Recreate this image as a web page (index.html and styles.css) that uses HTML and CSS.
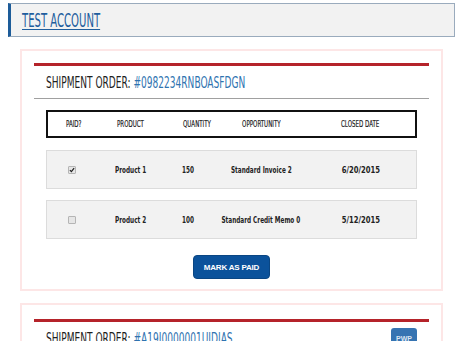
FILE: index.html
```html
<!DOCTYPE html>
<html>
<head>
<meta charset="utf-8">
<link rel="stylesheet" href="styles.css">
</head>
<body>
<div class="account"><a href="#" class="account-link sx">TEST ACCOUNT</a></div>

<div class="card">
  <div class="card-head">
    <h2 class="title"><span class="sx">SHIPMENT ORDER: <span class="num">#0982234RNBOASFDGN</span></span></h2>
  </div>
  <div class="table">
    <div class="thead row">
      <div class="c c1"><span class="sx">PAID?</span></div>
      <div class="c c2"><span class="sx">PRODUCT</span></div>
      <div class="c c3"><span class="sx">QUANTITY</span></div>
      <div class="c c4"><span class="sx">OPPORTUNITY</span></div>
      <div class="c c5"><span class="sx">CLOSED DATE</span></div>
    </div>
    <div class="tr row">
      <div class="c c1"><span class="cb checked"><svg viewBox="0 0 8 8" width="6" height="6"><path d="M1.2 4.2 L3.2 6.2 L6.8 1.6" fill="none" stroke="#222" stroke-width="1.7"/></svg></span></div>
      <div class="c c2"><span class="sx">Product 1</span></div>
      <div class="c c3"><span class="sx">150</span></div>
      <div class="c c4"><span class="sx">Standard Invoice 2</span></div>
      <div class="c c5"><span class="sx">6/20/2015</span></div>
    </div>
    <div class="tr row tr2">
      <div class="c c1"><span class="cb"></span></div>
      <div class="c c2"><span class="sx">Product 2</span></div>
      <div class="c c3"><span class="sx">100</span></div>
      <div class="c c4"><span class="sx">Standard Credit Memo 0</span></div>
      <div class="c c5"><span class="sx">5/12/2015</span></div>
    </div>
  </div>
  <div class="actions"><button class="btn">MARK AS PAID</button></div>
</div>

<div class="card card2">
  <div class="card-head">
    <h2 class="title"><span class="sx">SHIPMENT ORDER: <span class="num">#A19J0000001UJDIAS</span></span></h2>
    <button class="badge">PWP</button>
  </div>
</div>
</body>
</html>
```
FILE: styles.css
```css
html, body { margin: 0; padding: 0; background: #fff; overflow: hidden; }
body {
  width: 474px; height: 341px;
  padding: 3px 0 0 8px;
  box-sizing: border-box;
  font-family: "DejaVu Sans Condensed", "DejaVu Sans", sans-serif;
}
.sx {
  display: inline-block;
  white-space: nowrap;
  transform-origin: left center;
}
.account {
  width: 447px; height: 34px;
  box-sizing: border-box;
  background: #f2f2f2;
  border: 1px solid #9aabbd;
  border-left: 3px solid #1d5c99;
  display: flex; align-items: center;
  padding-left: 11px;
}
.account-link {
  color: #1f5e9e;
  font-size: 19px;
  text-decoration: underline;
  text-underline-offset: 2px;
  text-decoration-thickness: 1px;
  transform: scaleX(0.59);
}
.card {
  margin: 12px 0 0 12px;
  width: 423px;
  box-sizing: border-box;
  border: 2px solid #fde6e6;
  padding: 12px 12px 10px 12px;
}
.card2 { padding-top: 14px; }
.card-head {
  border-top: 3px solid #b5232a;
  border-bottom: 1px solid #a0a0a0;
  height: 32px;
  display: flex; align-items: center; justify-content: space-between;
  padding: 0 12px;
}
.card2 .card-head { align-items: flex-start; }
.card2 .title { margin-top: 7px; }
.title {
  margin: 0;
  font-weight: normal;
  font-size: 16.5px;
  color: #1e1e1e;
}
.title .sx { transform: scaleX(0.61); }
.num { color: #2f73b0; }
.table { padding: 11px 12px 0; }
.row { display: flex; align-items: center; box-sizing: border-box; }
.thead {
  height: 28px;
  border: 2px solid #111;
  font-size: 9px;
  color: #1a1a1a;
}
.thead .sx { transform: scaleX(0.68); -webkit-text-stroke: 0.2px #1a1a1a; }
.tr {
  height: 39px;
  margin-top: 12px;
  background: #f2f2f2;
  border: 1px solid #dcdcdc;
  font-size: 9.5px;
  font-weight: bold;
  color: #222;
}
.tr2 { margin-top: 11px; }
.tr .sx { transform: scaleX(0.67); }
.tr .c5 .sx { transform: scaleX(0.8); }
.c { box-sizing: border-box; display: flex; align-items: center; }
.c1 { width: 64px; padding-left: 18px; }
.c2 { width: 68px; padding-left: 5px; }
.c3 { width: 37px; padding-left: 4px; }
.c4 { width: 90px; justify-content: center; }
.c5 { width: 110px; justify-content: center; }
.c4 .sx, .c5 .sx { transform-origin: center center; }
.tr .c1 { padding-left: 21px; }
.tr .c2 { padding-left: 4px; }
.tr .c3 { padding-left: 3px; }
.thead .c2 { padding-left: 5px; }
.cb {
  display: inline-flex; align-items: center; justify-content: center;
  width: 8px; height: 8px;
  box-sizing: border-box;
  border: 1px solid #b5b5b5;
  background: #e6e6e6;
  border-radius: 1px;
}
.actions { display: flex; justify-content: center; padding: 16px 0 0; }
.btn {
  width: 77px; height: 24px;
  background: #0b529b;
  color: #fff;
  border: 1px solid #0a4683;
  border-radius: 4px;
  font-family: "Liberation Sans", Arial, sans-serif;
  font-weight: bold;
  font-size: 8px;
  letter-spacing: -0.2px;
  padding: 0;
}
.badge {
  background: #3674b2;
  color: #dbe6f2;
  border: 0;
  border-radius: 3px;
  width: 26px; height: 20px;
  font-family: "Liberation Sans", Arial, sans-serif;
  font-size: 7px; font-weight: bold;
  padding: 0;
  margin-top: 6px;
}
```
